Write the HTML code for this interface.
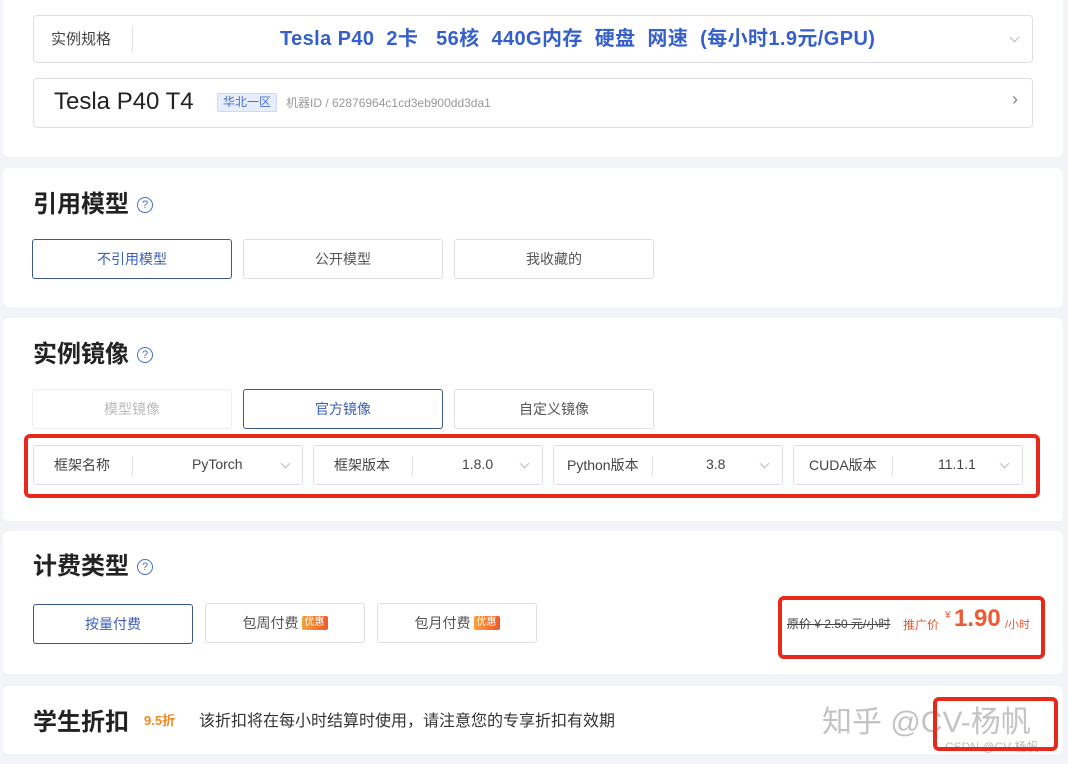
<!DOCTYPE html><html><head><meta charset="utf-8"><style>
*{margin:0;padding:0;box-sizing:border-box}
body{width:1068px;height:764px;background:#f3f4f7;position:relative;overflow:hidden;font-family:"Liberation Sans","Noto Sans CJK SC",sans-serif;color:#333}
.a{position:absolute}
.card{position:absolute;left:3px;width:1060px;background:#fff;border-radius:6px}
.box{position:absolute;border:1px solid #dcdfe6;border-radius:4px;background:#fff}
.btn{position:absolute;height:40px;width:200px;border:1px solid #dcdfe6;border-radius:3px;font-size:14px;color:#555;display:flex;align-items:center;justify-content:center}
.sel{border-color:#3a5a8c;color:#3d5fb8}
h2{position:absolute;font-size:24px;font-weight:bold;color:#222;display:flex;align-items:center;line-height:28px}
.q{display:inline-block;width:16px;height:16px;border:1.3px solid #3d6fd0;border-radius:50%;color:#3d6fd0;font-size:11px;font-weight:normal;text-align:center;line-height:14px;margin-left:8px}
.dd{position:absolute;top:445px;height:40px;border:1px solid #dcdfe6;border-radius:3px;font-size:14px;color:#444}
.dd .l{position:absolute;left:20px;top:9px}
.dd .s{position:absolute;top:10px;width:1px;height:20px;background:#e2e2e2}
.dd .v{position:absolute;top:10px}
.chev{position:absolute;top:14px;width:7px;height:7px;border-right:1px solid #bbb;border-bottom:1px solid #bbb;transform:rotate(45deg)}
.red{position:absolute;border:4px solid #e8281b;border-radius:6px}
.tag{display:inline-block;background:linear-gradient(90deg,#f7a23a,#ee5a2c);color:#fff;font-size:10px;padding:0 3px;margin-left:3px;border-radius:2px;line-height:14px}
</style></head><body>
<div class="card" style="top:-6px;height:163px"></div>
<div class="box" style="left:33px;top:15px;width:1000px;height:48px">
<div class="a" style="left:17px;top:12px;font-size:15px;color:#444">实例规格</div>
<div class="a" style="left:98px;top:10px;width:1px;height:26px;background:#e2e2e2"></div>
<div class="a" style="left:246px;top:6px;font-size:20px;letter-spacing:0.4px;font-weight:bold;color:#3560cc;white-space:pre">Tesla P40  2卡   56核  440G内存  硬盘  网速  (每小时1.9元/GPU)</div>
<div class="chev" style="left:977px;top:18px"></div></div>
<div class="box" style="left:33px;top:78px;width:1000px;height:50px">
<div class="a" style="left:20px;top:9px;font-size:24px;color:#222">Tesla P40 T4</div>
<div class="a" style="left:183px;top:14px;font-size:12px;color:#4a6fc8;background:#e6eefc;border:1px solid #c9d8f5;padding:0 5px;line-height:17px;border-radius:2px">华北一区</div>
<div class="a" style="left:252px;top:15px;font-size:12px;color:#999">机器ID / 62876964c1cd3eb900dd3da1</div>
<div class="a" style="left:978px;top:10px;font-size:18px;color:#888">›</div></div>

<div class="card" style="top:168px;height:139px"></div>
<h2 style="left:33px;top:191px">引用模型<span class="q">?</span></h2>
<div class="btn sel" style="left:32px;top:239px">不引用模型</div>
<div class="btn" style="left:243px;top:239px">公开模型</div>
<div class="btn" style="left:454px;top:239px">我收藏的</div>

<div class="card" style="top:318px;height:203px"></div>
<h2 style="left:33px;top:341px">实例镜像<span class="q">?</span></h2>
<div class="btn" style="left:32px;top:389px;color:#bbb;border-color:#eee">模型镜像</div>
<div class="btn sel" style="left:243px;top:389px">官方镜像</div>
<div class="btn" style="left:454px;top:389px">自定义镜像</div>
<div class="dd" style="left:33px;width:270px"><span class="l">框架名称</span><span class="s" style="left:98px"></span><span class="v" style="left:158px">PyTorch</span><span class="chev" style="left:248px"></span></div>
<div class="dd" style="left:313px;width:230px"><span class="l">框架版本</span><span class="s" style="left:98px"></span><span class="v" style="left:148px">1.8.0</span><span class="chev" style="left:207px"></span></div>
<div class="dd" style="left:553px;width:230px"><span class="l" style="left:13px">Python版本</span><span class="s" style="left:98px"></span><span class="v" style="left:152px">3.8</span><span class="chev" style="left:207px"></span></div>
<div class="dd" style="left:793px;width:230px"><span class="l" style="left:15px">CUDA版本</span><span class="s" style="left:98px"></span><span class="v" style="left:144px">11.1.1</span><span class="chev" style="left:207px"></span></div>
<div class="red" style="left:24px;top:434px;width:1016px;height:64px"></div>

<div class="card" style="top:531px;height:143px"></div>
<h2 style="left:33px;top:553px">计费类型<span class="q">?</span></h2>
<div class="btn sel" style="left:33px;top:604px;width:160px">按量付费</div>
<div class="btn" style="left:205px;top:603px;width:160px">包周付费<span class="tag">优惠</span></div>
<div class="btn" style="left:377px;top:603px;width:160px">包月付费<span class="tag">优惠</span></div>
<div class="a" style="left:787px;top:615px;font-size:12px;color:#444;text-decoration:line-through">原价 ¥ 2.50 元/小时</div>
<div class="a" style="left:903px;top:616px;font-size:12px;color:#e8562e">推广价</div>
<div class="a" style="left:945px;top:610px;font-size:10px;color:#e8562e">¥</div>
<div class="a" style="left:954px;top:605px;font-size:24px;font-weight:bold;color:#ef5a32">1.90</div>
<div class="a" style="left:1005px;top:616px;font-size:11px;color:#e8562e">/小时</div>
<div class="red" style="left:778px;top:596px;width:267px;height:63px"></div>

<div class="card" style="top:686px;height:68px"></div>
<div class="a" style="left:33px;top:702px;font-size:24px;font-weight:bold;color:#222">学生折扣</div>
<div class="a" style="left:144px;top:710px;font-size:13px;font-weight:bold;color:#ef8a1e">9.5折</div>
<div class="a" style="left:199px;top:707px;font-size:16px;color:#333">该折扣将在每小时结算时使用，请注意您的专享折扣有效期</div>
<div class="a" style="left:822px;top:697px;font-size:30px;color:rgba(180,180,180,.8)">知乎 @CV-杨帆</div>
<div class="a" style="left:945px;top:738px;font-size:12px;color:#bbb">CSDN @CV-杨帆</div>
<div class="red" style="left:933px;top:697px;width:125px;height:54px"></div>
</body></html>
